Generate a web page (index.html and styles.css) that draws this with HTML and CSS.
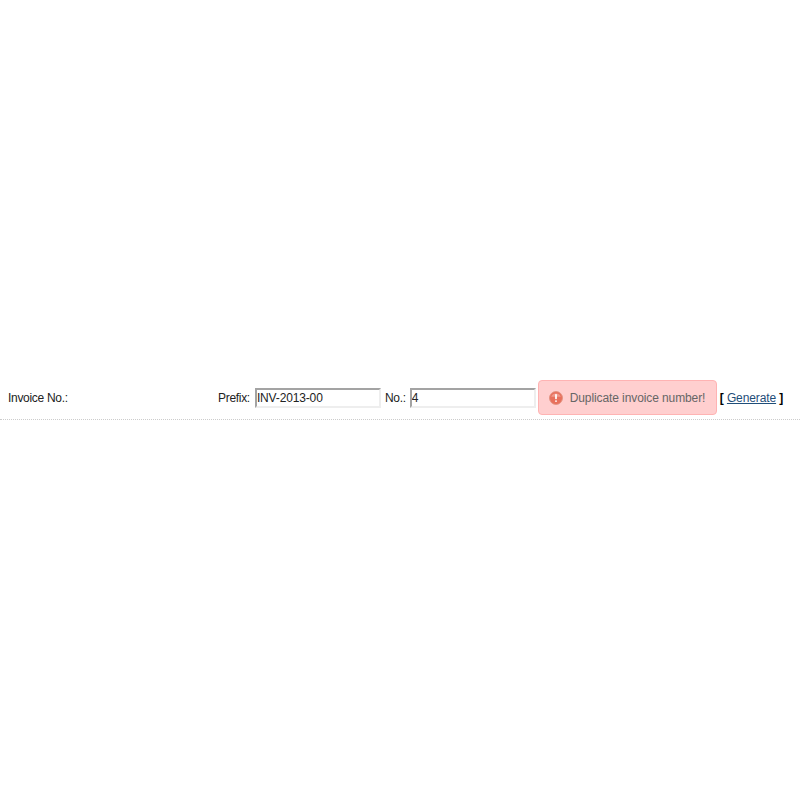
FILE: index.html
```html
<!DOCTYPE html>
<html>
    <head>
        <title>Invoice No.</title>
        <link rel="stylesheet" href="styles.css">
    </head>
    <body>
        <div class="row">
            <div class="label">Invoice No.:</div>
            <div class="fields">
                <span class="field-label">Prefix:</span>
                <input class="text-input" type="text" value="INV-2013-00">
                <span class="field-label no-label">No.:</span>
                <input class="text-input" type="text" value="4">
                <div class="error-box">
                    <svg class="error-icon" width="14" height="14" viewBox="0 0 16 16">
                        <circle cx="8" cy="8" r="7.4" fill="#e8705c" stroke="#e0907f" stroke-width="1"/>
                        <path d="M2.5 6.5 A6 6 0 0 1 13.5 6.5 Z" fill="#f09a8c"/>
                        <rect x="7" y="3.5" width="2" height="6" rx="0.8" fill="#fff"/>
                        <rect x="7" y="10.5" width="2" height="2" rx="0.8" fill="#fff"/>
                    </svg>
                    <span>Duplicate invoice number!</span>
                </div>
                <span class="action"><b>[</b> <a href="#">Generate</a> <b>]</b></span>
            </div>
        </div>
    </body>
</html>
```

FILE: styles.css
```css
body {
    margin: 0;
    padding-top: 380px;
    background-color: #fff;
    font-family: "Liberation Sans", Arial, sans-serif;
    font-size: 12px;
    letter-spacing: -0.3px;
    color: #222;
}
.row {
    display: flex;
    align-items: center;
    height: 35px;
    padding-left: 8px;
    padding-bottom: 4px;
    border-bottom: 1px dotted #ccc;
}
.label {
    width: 210px;
}
.fields {
    display: flex;
    align-items: center;
}
.field-label {
    margin-right: 5px;
}
.no-label {
    margin-left: 4px;
    margin-right: 4px;
}
.text-input {
    box-sizing: border-box;
    width: 126px;
    height: 20px;
    padding: 0;
    border: 2px solid;
    border-color: #a3a3a3 #eee #eee #a3a3a3;
    font-family: "Liberation Sans", Arial, sans-serif;
    font-size: 12px;
    letter-spacing: -0.15px;
    color: #222;
    background-color: #fff;
}
.error-box {
    box-sizing: border-box;
    display: flex;
    align-items: center;
    gap: 7px;
    width: 179px;
    height: 35px;
    margin-left: 2px;
    padding: 0 10px;
    background-color: #ffcfcf;
    border: 1px solid #ffb3b3;
    border-radius: 4px;
    letter-spacing: -0.1px;
    white-space: nowrap;
    color: #666;
}
.error-icon {
    flex-shrink: 0;
}
.action {
    margin-left: 3px;
    letter-spacing: -0.1px;
}
.action a {
    color: #1f4e79;
}
.action b {
    color: #000;
}
```
